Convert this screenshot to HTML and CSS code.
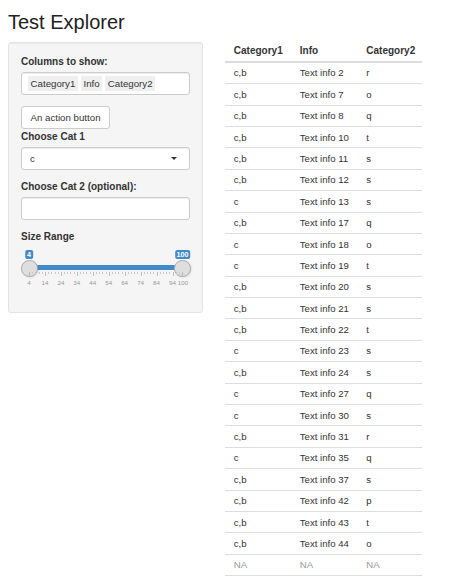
FILE: index.html
```html
<!DOCTYPE html>
<html lang="en">
<head>
<meta charset="utf-8">
<title>Test Explorer</title>
<link rel="stylesheet" href="styles.css">
</head>
<body>
<div class="page">
  <h1 class="title">Test Explorer</h1>
  <div class="layout">
    <aside class="well">
      <div class="form-group fg-first">
        <label class="lbl">Columns to show:</label>
        <div class="control multi">
          <span class="item">Category1</span><span class="item">Info</span><span class="item">Category2</span>
        </div>
      </div>
      <button class="btn" type="button">An action button</button>
      <div class="form-group">
        <label class="lbl">Choose Cat 1</label>
        <div class="control single"><span class="val">c</span><span class="caret"></span></div>
      </div>
      <div class="form-group">
        <label class="lbl">Choose Cat 2 (optional):</label>
        <div class="control text"></div>
      </div>
      <div class="form-group">
        <label class="lbl">Size Range</label>
        <div class="slider">
          <div class="track"></div>
          <div class="bar"></div>
          <span class="badge" style="left:8px">4</span>
          <span class="badge" style="left:161.5px">100</span>
          <span class="handle" style="left:0"></span>
          <span class="handle" style="left:153px"></span>
          <div class="grid">
            <span class="tick major" style="left:8px"></span>
            <span class="tick" style="left:11.2px"></span>
            <span class="tick" style="left:14.4px"></span>
            <span class="tick" style="left:17.6px"></span>
            <span class="tick" style="left:20.7px"></span>
            <span class="tick major" style="left:23.9px"></span>
            <span class="tick" style="left:27.1px"></span>
            <span class="tick" style="left:30.3px"></span>
            <span class="tick" style="left:33.5px"></span>
            <span class="tick" style="left:36.7px"></span>
            <span class="tick major" style="left:39.9px"></span>
            <span class="tick" style="left:43.1px"></span>
            <span class="tick" style="left:46.3px"></span>
            <span class="tick" style="left:49.4px"></span>
            <span class="tick" style="left:52.6px"></span>
            <span class="tick major" style="left:55.8px"></span>
            <span class="tick" style="left:59px"></span>
            <span class="tick" style="left:62.2px"></span>
            <span class="tick" style="left:65.4px"></span>
            <span class="tick" style="left:68.6px"></span>
            <span class="tick major" style="left:71.8px"></span>
            <span class="tick" style="left:75px"></span>
            <span class="tick" style="left:78.1px"></span>
            <span class="tick" style="left:81.3px"></span>
            <span class="tick" style="left:84.5px"></span>
            <span class="tick major" style="left:87.7px"></span>
            <span class="tick" style="left:90.9px"></span>
            <span class="tick" style="left:94.1px"></span>
            <span class="tick" style="left:97.3px"></span>
            <span class="tick" style="left:100.5px"></span>
            <span class="tick major" style="left:103.6px"></span>
            <span class="tick" style="left:106.8px"></span>
            <span class="tick" style="left:110px"></span>
            <span class="tick" style="left:113.2px"></span>
            <span class="tick" style="left:116.4px"></span>
            <span class="tick major" style="left:119.6px"></span>
            <span class="tick" style="left:122.8px"></span>
            <span class="tick" style="left:126px"></span>
            <span class="tick" style="left:129.2px"></span>
            <span class="tick" style="left:132.3px"></span>
            <span class="tick major" style="left:135.5px"></span>
            <span class="tick" style="left:138.7px"></span>
            <span class="tick" style="left:141.9px"></span>
            <span class="tick" style="left:145.1px"></span>
            <span class="tick" style="left:148.3px"></span>
            <span class="tick major" style="left:151.5px"></span>
            <span class="tick" style="left:154.7px"></span>
            <span class="tick" style="left:157.8px"></span>
            <span class="tick major" style="left:161px"></span>
            <span class="glabel" style="left:8px">4</span>
            <span class="glabel" style="left:23.9px">14</span>
            <span class="glabel" style="left:39.9px">24</span>
            <span class="glabel" style="left:55.8px">34</span>
            <span class="glabel" style="left:71.8px">44</span>
            <span class="glabel" style="left:87.7px">54</span>
            <span class="glabel" style="left:103.6px">64</span>
            <span class="glabel" style="left:119.6px">74</span>
            <span class="glabel" style="left:135.5px">84</span>
            <span class="glabel" style="left:151.5px">94</span>
            <span class="glabel" style="left:162px">100</span>
          </div>
        </div>
      </div>
    </aside>
    <main class="main">
      <table class="tbl">
        <colgroup><col class="c1"><col class="c2"><col class="c3"></colgroup>
        <thead>
          <tr><th>Category1</th><th>Info</th><th>Category2</th></tr>
        </thead>
        <tbody>
          <tr><td>c,b</td><td>Text info 2</td><td>r</td></tr>
          <tr><td>c,b</td><td>Text info 7</td><td>o</td></tr>
          <tr><td>c,b</td><td>Text info 8</td><td>q</td></tr>
          <tr><td>c,b</td><td>Text info 10</td><td>t</td></tr>
          <tr><td>c,b</td><td>Text info 11</td><td>s</td></tr>
          <tr><td>c,b</td><td>Text info 12</td><td>s</td></tr>
          <tr><td>c</td><td>Text info 13</td><td>s</td></tr>
          <tr><td>c,b</td><td>Text info 17</td><td>q</td></tr>
          <tr><td>c</td><td>Text info 18</td><td>o</td></tr>
          <tr><td>c</td><td>Text info 19</td><td>t</td></tr>
          <tr><td>c,b</td><td>Text info 20</td><td>s</td></tr>
          <tr><td>c,b</td><td>Text info 21</td><td>s</td></tr>
          <tr><td>c,b</td><td>Text info 22</td><td>t</td></tr>
          <tr><td>c</td><td>Text info 23</td><td>s</td></tr>
          <tr><td>c,b</td><td>Text info 24</td><td>s</td></tr>
          <tr><td>c</td><td>Text info 27</td><td>q</td></tr>
          <tr><td>c</td><td>Text info 30</td><td>s</td></tr>
          <tr><td>c,b</td><td>Text info 31</td><td>r</td></tr>
          <tr><td>c</td><td>Text info 35</td><td>q</td></tr>
          <tr><td>c,b</td><td>Text info 37</td><td>s</td></tr>
          <tr><td>c,b</td><td>Text info 42</td><td>p</td></tr>
          <tr><td>c,b</td><td>Text info 43</td><td>t</td></tr>
          <tr><td>c,b</td><td>Text info 44</td><td>o</td></tr>
          <tr class="na"><td>NA</td><td>NA</td><td>NA</td></tr>
        </tbody>
      </table>
    </main>
  </div>
</div>
</body>
</html>
```
FILE: styles.css
```css
* { box-sizing: border-box; }
html, body { margin: 0; padding: 0; background: #fff; }
body {
  font-family: "Liberation Sans", Arial, sans-serif;
  font-size: 9.6px;
  line-height: 13.2px;
  color: #333;
}
.page { padding: 0 8px; }
.title {
  margin: 11px 0 9px;
  font-size: 20px;
  line-height: 22px;
  font-weight: 400;
  color: #222;
}
.layout { display: flex; align-items: flex-start; }

.well {
  width: 195px;
  flex: 0 0 195px;
  background: #f5f5f5;
  border: 1px solid #e3e3e3;
  border-radius: 3px;
  box-shadow: inset 0 1px 1px rgba(0,0,0,0.05);
  padding: 12px 12px 12px;
}
.form-group { margin-bottom: 10px; }
.fg-first { margin-bottom: 11px; }
.lbl {
  display: block;
  font-weight: 700;
  font-size: 10px;
  line-height: 13.2px;
  margin-bottom: 3.8px;
}
.control {
  height: 23px;
  background: #fff;
  border: 1px solid #ccc;
  border-radius: 3px;
  box-shadow: inset 0 1px 1px rgba(0,0,0,0.075);
}
.multi {
  display: flex;
  align-items: center;
  padding: 0 6px;
}
.item {
  background: #efefef;
  color: #333;
  height: 15px;
  line-height: 15px;
  padding: 0 2.6px;
  margin-right: 3px;
  font-size: 9.7px;
}
.single {
  display: flex;
  align-items: center;
  justify-content: space-between;
  padding: 0 12px 0 8px;
}
.caret {
  width: 0;
  height: 0;
  border-left: 3px solid transparent;
  border-right: 3px solid transparent;
  border-top: 3.5px solid #333;
}
.btn {
  display: block;
  height: 23px;
  padding: 0 8.5px;
  margin: 0 0 1px;
  background: #fff;
  border: 1px solid #ccc;
  border-radius: 3px;
  font-family: "Liberation Sans", Arial, sans-serif;
  font-size: 9.7px;
  color: #333;
  line-height: 21px;
}

.slider { position: relative; height: 43px; }
.track {
  position: absolute;
  left: 2px; right: 2px;
  top: 17.5px;
  height: 5.5px;
  background: #ededed;
  border: 1px solid #ccc;
  border-radius: 4px;
}
.bar {
  position: absolute;
  left: 8px;
  width: 153px;
  top: 17.5px;
  height: 5.5px;
  background: #428bca;
}
.badge {
  position: absolute;
  top: 3px;
  transform: translateX(-50%);
  background: #428bca;
  color: #fff;
  font-size: 7.2px;
  font-weight: 700;
  line-height: 9px;
  padding: 0 1.8px;
  border-radius: 2px;
  white-space: nowrap;
}
.handle {
  position: absolute;
  top: 13px;
  width: 16.5px;
  height: 16.5px;
  border-radius: 50%;
  background: #dedede;
  border: 1px solid #ababab;
  box-shadow: 1px 1px 2px rgba(0,0,0,0.08);
}
.grid { position: absolute; left: 0; right: 0; top: 25px; height: 18px; }
.tick {
  position: absolute;
  top: 0;
  width: 1px;
  height: 2px;
  background: #c8c8c8;
}
.tick.major { height: 3.5px; background: #bbb; }
.glabel {
  position: absolute;
  top: 7px;
  transform: translateX(-50%);
  font-size: 6.2px;
  line-height: 7px;
  color: #999;
  white-space: nowrap;
}

.main { margin-left: 22px; }
.tbl {
  border-collapse: separate;
  border-spacing: 0;
  width: 197px;
  table-layout: fixed;
}
.c1 { width: 66px; }
.c2 { width: 66.5px; }
.c3 { width: 64.5px; }
.tbl th {
  text-align: left;
  font-weight: 700;
  font-size: 10px;
  padding: 2px 4px 3.6px 8.8px;
  line-height: 13.2px;
  border-bottom: 2px solid #ddd;
  white-space: nowrap;
}
.tbl td {
  padding: 3.6px 4px 3.6px 8.8px;
  line-height: 13.2px;
  border-bottom: 1px solid #ddd;
  white-space: nowrap;
}
.tbl tr.na td { color: #999; }
```
